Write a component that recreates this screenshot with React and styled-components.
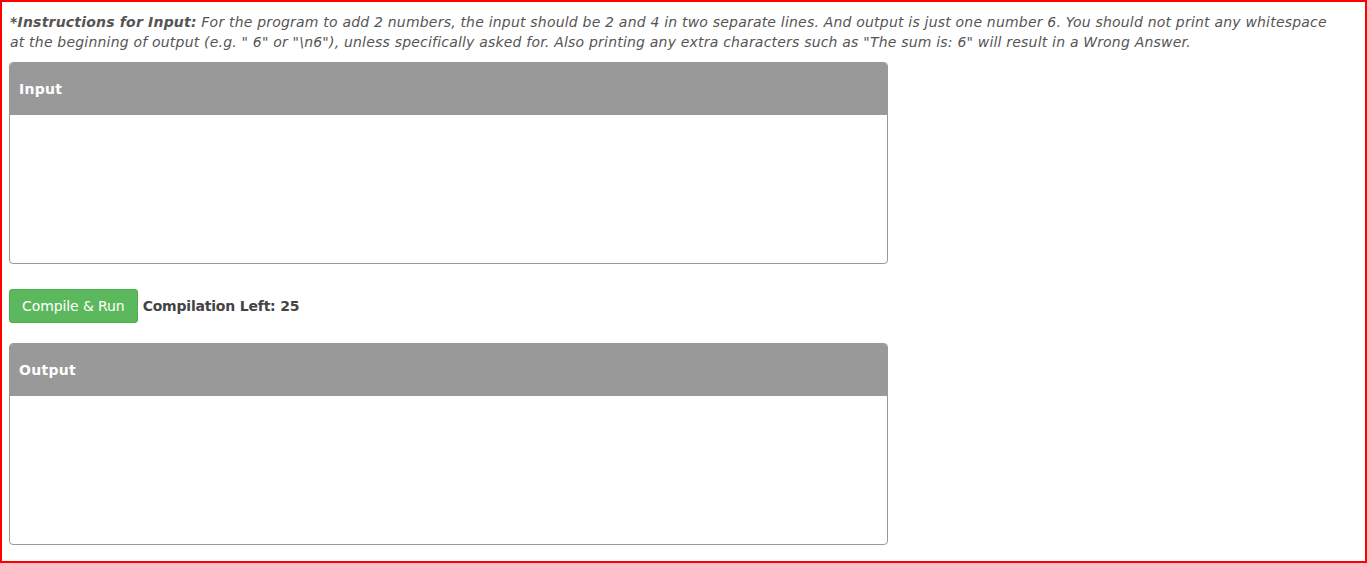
import React from 'react';
import styled, { createGlobalStyle } from 'styled-components';

const GlobalStyle = createGlobalStyle`
  html, body {
    margin: 0;
    padding: 0;
    background: #fff;
  }
  body {
    font-family: "DejaVu Sans", Verdana, sans-serif;
    color: #555;
  }
`;

const Frame = styled.div`
  box-sizing: border-box;
  width: 1367px;
  height: 563px;
  border: 2px solid #f00;
  padding: 10px 7px 8px;
`;

const Instructions = styled.p`
  max-width: 1325px;
  margin: 0 0 10px 1px;
  font-size: 14px;
  line-height: 20px;
  letter-spacing: 0.2px;
  font-style: italic;
  color: #555;
  b {
    font-weight: bold;
  }
`;

const Panel = styled.div`
  box-sizing: border-box;
  width: 879px;
  height: 202px;
  border: 1px solid #999;
  border-radius: 4px;
  overflow: hidden;
  display: flex;
  flex-direction: column;
  background: #fff;
`;

const PanelHeader = styled.div`
  height: 52px;
  background: #999;
  color: #fff;
  font-weight: bold;
  font-size: 14px;
  letter-spacing: 0.3px;
  display: flex;
  align-items: center;
  padding: 0 9px;
`;

const RunRow = styled.div`
  display: flex;
  align-items: center;
  gap: 5px;
  margin: 25px 0 20px;
`;

const RunButton = styled.button`
  box-sizing: border-box;
  height: 34px;
  padding: 0 12px;
  background: #5cb85c;
  border: 1px solid #4cae4c;
  border-radius: 3px;
  color: #fff;
  font-family: "DejaVu Sans", Verdana, sans-serif;
  font-size: 14px;
  letter-spacing: -0.1px;
  cursor: pointer;
`;

const Counter = styled.span`
  font-size: 14px;
  font-weight: bold;
  letter-spacing: -0.2px;
  color: #444;
`;

const App = () => (
  <>
    <GlobalStyle />
    <Frame>
      <Instructions>
        <b>*Instructions for Input:</b> For the program to add 2 numbers, the input should be 2 and 4 in two separate lines. And output is just one number 6. You should not print any whitespace at the beginning of output (e.g. " 6" or "\n6"), unless specifically asked for. Also printing any extra characters such as "The sum is: 6" will result in a Wrong Answer.
      </Instructions>
      <Panel>
        <PanelHeader>Input</PanelHeader>
      </Panel>
      <RunRow>
        <RunButton>Compile &amp; Run</RunButton>
        <Counter>Compilation Left: 25</Counter>
      </RunRow>
      <Panel>
        <PanelHeader>Output</PanelHeader>
      </Panel>
    </Frame>
  </>
);

export default App;
